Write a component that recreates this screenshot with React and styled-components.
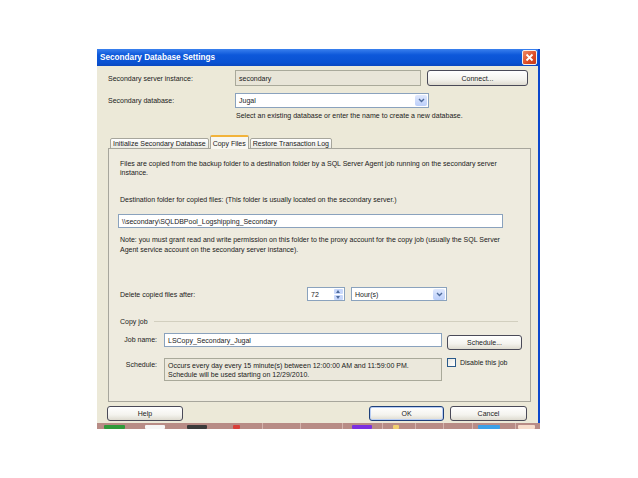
import styled, { createGlobalStyle } from 'styled-components';

const GlobalStyle = createGlobalStyle`
  body {
    margin: 0;
    background: #ffffff;
    font-family: "Liberation Sans", Arial, sans-serif;
    font-size: 7px;
    line-height: 9px;
    color: #1a1a1a;
  }
`;

function Chevron() {
  return (
    <svg width="7" height="5" viewBox="0 0 7 5">
      <path d="M1 1 L3.5 3.5 L6 1" stroke="#4d6a9c" strokeWidth="1.4" fill="none" />
    </svg>
  );
}

function TaskStrip() {
  const seps = [165, 203, 245, 285, 318, 346, 375, 418];
  const blobs = [
    [7, 21, '#2f9a3a'],
    [48, 20, '#f6f6f6'],
    [90, 20, '#3b3a3a'],
    [136, 7, '#d8403a'],
    [255, 20, '#7b2fe0'],
    [296, 6, '#f0d070'],
    [381, 22, '#3aa0e8'],
    [421, 17, '#f6dccb'],
  ];
  return (
    <svg width="443" height="6" viewBox="0 0 443 6" style={{ display: 'block' }}>
      <rect width="443" height="6" fill="#b88c86" />
      {seps.map((x) => (
        <rect key={x} x={x} y="0" width="1" height="6" fill="#d4b4ae" />
      ))}
      {blobs.map(([x, w, c]) => (
        <rect key={x} x={x} y="2" width={w} height="4" rx="1" fill={c} />
      ))}
    </svg>
  );
}

export default function App() {
  return (
    <>
      <GlobalStyle />
      <Page>
        <Window>
          <TitleBar>
            <span>Secondary Database Settings</span>
            <CloseButton>
              <svg width="9" height="9" viewBox="0 0 9 9">
                <path d="M1.5 1.5 L7.5 7.5 M7.5 1.5 L1.5 7.5" stroke="#fff" strokeWidth="1.8" />
              </svg>
            </CloseButton>
          </TitleBar>
          <Body>
            <Row>
              <Label>Secondary server instance:</Label>
              <TextBox $w={186} $h={16} $readOnly>secondary</TextBox>
              <Button $w={101} $h={16} style={{ marginLeft: 6 }}>Connect...</Button>
            </Row>
            <Row $top={7}>
              <Label>Secondary database:</Label>
              <Combo $w={194} $h={15}>
                <span>Jugal</span>
                <DropArrow><Chevron /></DropArrow>
              </Combo>
            </Row>
            <Hint>Select an existing database or enter the name to create a new database.</Hint>

            <TabStrip>
              <Tab>Initialize Secondary Database</Tab>
              <Tab $active>Copy Files</Tab>
              <Tab>Restore Transaction Log</Tab>
            </TabStrip>
            <Panel>
              <Text>
                Files are copied from the backup folder to a destination folder by a SQL Server Agent job running on the secondary server
                <br />
                instance.
              </Text>
              <Text $top={18}>
                Destination folder for copied files: (This folder is usually located on the secondary server.)
              </Text>
              <TextBox $w={385} $h={14} $top={10} $left={-2}>
                \\secondary\SQLDBPool_Logshipping_Secondary
              </TextBox>
              <Text $top={7} $lh={10}>
                Note: you must grant read and write permission on this folder to the proxy account for the copy job (usually the SQL Server
                <br />
                Agent service account on the secondary server instance).
              </Text>
              <Row $top={32}>
                <Label $w={187}>Delete copied files after:</Label>
                <Spin>
                  <span>72</span>
                  <SpinButtons>
                    <SpinArrow $up />
                    <SpinArrow />
                  </SpinButtons>
                </Spin>
                <Combo $w={96} $h={14} style={{ marginLeft: 6 }}>
                  <span>Hour(s)</span>
                  <DropArrow><Chevron /></DropArrow>
                </Combo>
              </Row>
              <GroupHeader>
                <span>Copy job</span>
                <GroupLine />
              </GroupHeader>
              <JobGrid>
                <JobLabel>Job name:</JobLabel>
                <TextBox $w={278} $h={14}>LSCopy_Secondary_Jugal</TextBox>
                <Button $w={75} $h={15} style={{ marginTop: 2 }}>Schedule...</Button>
                <JobLabel>Schedule:</JobLabel>
                <ScheduleBox>
                  Occurs every day every 15 minute(s) between 12:00:00 AM and 11:59:00 PM.
                  <br />
                  Schedule will be used starting on 12/29/2010.
                </ScheduleBox>
                <CheckRow>
                  <CheckBox />
                  <span>Disable this job</span>
                </CheckRow>
              </JobGrid>
            </Panel>
            <ButtonBar>
              <Button $w={76} $h={15}>Help</Button>
              <Spacer />
              <Button $w={75} $h={15} $default>OK</Button>
              <Button $w={77} $h={15}>Cancel</Button>
            </ButtonBar>
          </Body>
          <TaskStrip />
        </Window>
      </Page>
    </>
  );
}

const Page = styled.div`
  padding: 49px 0 0 97px;
`;

const Window = styled.div`
  width: 443px;
  box-sizing: border-box;
  background: #ece9d8;
  border-right: 2px solid #0b47cc;
  display: flex;
  flex-direction: column;
`;

const TitleBar = styled.div`
  height: 17px;
  display: flex;
  align-items: center;
  justify-content: space-between;
  padding: 0 1px 0 3px;
  background: linear-gradient(to bottom, #3a80ee 0%, #0d58da 35%, #0a52d2 80%, #0a48c0 100%);
  color: #ffffff;
  font-weight: bold;
  font-size: 8.2px;
`;

const CloseButton = styled.div`
  width: 15px;
  height: 15px;
  box-sizing: border-box;
  border: 1px solid #f4f0ee;
  border-radius: 2px;
  background: linear-gradient(135deg, #f08a64, #dc4a24 60%, #c83a1a);
  display: flex;
  align-items: center;
  justify-content: center;
`;

const Body = styled.div`
  padding: 4px 8px 0 11px;
  display: flex;
  flex-direction: column;
`;

const Row = styled.div`
  display: flex;
  align-items: center;
  margin-top: ${(p) => p.$top || 0}px;
`;

const Label = styled.div`
  width: ${(p) => p.$w || 127}px;
  flex-shrink: 0;
`;

const TextBox = styled.div`
  width: ${(p) => p.$w}px;
  height: ${(p) => p.$h}px;
  margin-top: ${(p) => p.$top || 0}px;
  margin-left: ${(p) => p.$left || 0}px;
  box-sizing: border-box;
  border: 1px solid ${(p) => (p.$readOnly ? '#a9a99a' : '#8aa2bd')};
  background: ${(p) => (p.$readOnly ? '#e8e5d8' : '#ffffff')};
  padding: 0 3px;
  display: flex;
  align-items: center;
  white-space: nowrap;
`;

const Combo = styled(TextBox)`
  justify-content: space-between;
  padding-right: 1px;
`;

const DropArrow = styled.div`
  width: 12px;
  height: 11px;
  border-radius: 2px;
  background: linear-gradient(to bottom, #dfe8fd, #bccffa);
  display: flex;
  align-items: center;
  justify-content: center;
`;

const Button = styled.div`
  width: ${(p) => p.$w}px;
  height: ${(p) => p.$h}px;
  box-sizing: border-box;
  border: 1px solid ${(p) => (p.$default ? '#1d3f7a' : '#4a4a58')};
  border-radius: 3px;
  background: linear-gradient(to bottom, #ffffff 0%, #f4f3ee 60%, #dedbd0 100%);
  box-shadow: ${(p) => (p.$default ? 'inset 0 0 0 1px #b8cdf4' : 'none')};
  display: flex;
  align-items: center;
  justify-content: center;
  flex-shrink: 0;
`;

const Hint = styled.div`
  margin: 3px 0 0 128px;
  letter-spacing: 0.02px;
`;

const TabStrip = styled.div`
  display: flex;
  align-items: flex-end;
  margin-top: 15px;
  padding-left: 2px;
  height: 14px;
  position: relative;
  z-index: 1;
`;

const Tab = styled.div`
  height: ${(p) => (p.$active ? 14 : 11)}px;
  box-sizing: border-box;
  padding: 0 2px;
  border: 1px solid #a7a69c;
  border-bottom: ${(p) => (p.$active ? 'none' : '1px solid #a7a69c')};
  border-top: ${(p) => (p.$active ? '2px solid #f2b33a' : '1px solid #a7a69c')};
  border-radius: 2px 2px 0 0;
  background: ${(p) => (p.$active ? '#f8f7f2' : 'linear-gradient(to bottom, #ffffff, #ecebe4)')};
  margin: 0 ${(p) => (p.$active ? 1 : 0)}px;
  display: flex;
  align-items: center;
  white-space: nowrap;
`;

const Panel = styled.div`
  width: 423px;
  height: 254px;
  box-sizing: border-box;
  margin-top: -1px;
  border: 1px solid #a7a69c;
  background: #eeebdf;
  padding: 10px 12px 0 11px;
  display: flex;
  flex-direction: column;
`;

const Text = styled.div`
  margin-top: ${(p) => p.$top || 0}px;
  line-height: ${(p) => p.$lh || 9}px;
  white-space: nowrap;
`;

const Spin = styled.div`
  width: 38px;
  height: 14px;
  box-sizing: border-box;
  border: 1px solid #8aa2bd;
  background: #ffffff;
  padding: 0 1px 0 3px;
  display: flex;
  align-items: center;
  justify-content: space-between;
`;

const SpinButtons = styled.div`
  display: flex;
  flex-direction: column;
  gap: 1px;
`;

const SpinArrow = styled.div`
  width: 9px;
  height: 5px;
  border-radius: 1px;
  background: #c9d8fb;
  position: relative;
  &::after {
    content: '';
    position: absolute;
    left: 2px;
    top: 1px;
    border-left: 2.5px solid transparent;
    border-right: 2.5px solid transparent;
    ${(p) => (p.$up ? 'border-bottom: 3px solid #4d6a9c;' : 'border-top: 3px solid #4d6a9c;')}
  }
`;

const GroupHeader = styled.div`
  margin-top: 16px;
  display: flex;
  align-items: center;
  gap: 6px;
`;

const GroupLine = styled.div`
  flex: 1;
  height: 0;
  border-top: 1px solid #d2cfbf;
  margin-right: 0;
`;

const JobGrid = styled.div`
  display: grid;
  grid-template-columns: 39px 278px 75px;
  column-gap: 5px;
  row-gap: 8px;
  margin-top: 7px;
  align-items: start;
`;

const JobLabel = styled.div`
  text-align: right;
  padding-top: 2px;
  margin-right: 2px;
`;

const ScheduleBox = styled.div`
  height: 23px;
  box-sizing: border-box;
  border: 1px solid #a9a99a;
  background: #ebe8dc;
  padding: 2px 3px;
  line-height: 9px;
  white-space: nowrap;
`;

const CheckRow = styled.div`
  display: flex;
  align-items: flex-start;
  gap: 4px;
  padding-top: 0;
`;

const CheckBox = styled.div`
  width: 9px;
  height: 9px;
  box-sizing: border-box;
  border: 1px solid #2a5a8a;
  background: linear-gradient(135deg, #e6e6e0, #ffffff);
`;

const ButtonBar = styled.div`
  display: flex;
  align-items: center;
  gap: 6px;
  margin: 4px 0 2px -1px;
  width: 420px;
`;

const Spacer = styled.div`
  flex: 1;
`;
